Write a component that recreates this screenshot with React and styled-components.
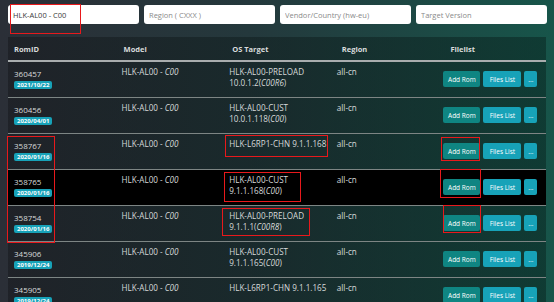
import React from "react";
import styled, { createGlobalStyle } from "styled-components";

const GlobalStyle = createGlobalStyle`
  html, body {
    margin: 0;
    padding: 0;
    width: 554px;
    height: 302px;
    overflow: hidden;
  }
  body {
    background: linear-gradient(90deg, #2b2f37 0%, #24383c 45%, #17554a 100%);
    font-family: "Open Sans", "Liberation Sans", sans-serif;
  }
`;

const Page = styled.div`
  position: relative;
  width: 554px;
  height: 302px;
  padding: 5px 7px 0 8px;
  box-sizing: border-box;
`;

const SearchBar = styled.div`
  display: grid;
  grid-template-columns: repeat(4, 1fr);
  column-gap: 5px;
  width: 539px;
`;

const SearchInput = styled.input`
  height: 19px;
  box-sizing: border-box;
  border: none;
  border-radius: 3px;
  background: #fff;
  padding: 0 5px;
  font-family: "Open Sans", "Liberation Sans", sans-serif;
  font-size: 7.5px;
  color: #3a3a3a;
  outline: none;
  &::placeholder {
    color: #8a8a8a;
  }
`;

const Table = styled.div`
  margin-top: 13px;
  width: 538px;
  background: linear-gradient(90deg, rgba(20, 22, 26, 0.5), rgba(8, 34, 30, 0.5));
`;

const Row = styled.div`
  display: grid;
  grid-template-columns: repeat(5, 1fr);
  height: ${(p) => (p.$head ? "23px" : "35px")};
  border-bottom: ${(p) => (p.$head ? "2px solid #a9adae" : "1px solid #7d8584")};
  background: ${(p) => (p.$hover ? "#000" : "transparent")};
`;

const HeadCell = styled.div`
  padding-left: ${(p) => p.$pad}px;
  display: flex;
  align-items: center;
  font-weight: 700;
  font-size: 7.5px;
  color: #d9dcdc;
`;

const Cell = styled.div`
  padding: 5px 0 0 6px;
  font-size: 8.1px;
  line-height: 10.5px;
  color: #d7dada;
  white-space: nowrap;
  em {
    font-style: italic;
  }
`;

const RomId = styled.div`
  font-size: 8px;
  line-height: 11px;
  margin-top: 1px;
`;

const Badge = styled.span`
  display: inline-block;
  margin-top: 2px;
  padding: 0 3px;
  height: 8px;
  line-height: 8px;
  border-radius: 2px;
  background: #17a2b8;
  color: #fff;
  font-size: 6px;
  font-weight: 700;
`;

const Actions = styled.div`
  display: flex;
  gap: 3px;
  padding: 9px 0 0 5px;
`;

const Btn = styled.button`
  height: 16px;
  width: ${(p) => p.$w}px;
  padding: 0;
  border: none;
  border-radius: 2px;
  background: ${(p) => (p.$dark ? "#0f8582" : "#17a2b8")};
  color: #fff;
  font-family: "Open Sans", "Liberation Sans", sans-serif;
  font-size: 6.5px;
  cursor: pointer;
`;

const Mark = styled.div`
  position: absolute;
  border: 1.5px solid #e8191c;
  box-sizing: border-box;
  pointer-events: none;
`;

const rows = [
  { id: "360457", date: "2021/10/22", os: ["HLK-AL00-PRELOAD", "10.0.1.2(", "C00R6", ")"] },
  { id: "360456", date: "2020/04/01", os: ["HLK-AL00-CUST", "10.0.1.118(", "C00", ")"] },
  { id: "358767", date: "2020/01/16", os: ["HLK-L6RP1-CHN 9.1.1.168"] },
  { id: "358765", date: "2020/01/16", os: ["HLK-AL00-CUST", "9.1.1.168(", "C00", ")"], hover: true },
  { id: "358754", date: "2020/01/16", os: ["HLK-AL00-PRELOAD", "9.1.1.1(", "C00R8", ")"] },
  { id: "345906", date: "2019/12/24", os: ["HLK-AL00-CUST", "9.1.1.165(", "C00", ")"] },
  { id: "345905", date: "2019/12/24", os: ["HLK-L6RP1-CHN 9.1.1.165"] },
];

const marks = [
  [10, 4, 71, 30],
  [7, 136, 48, 107],
  [225, 135, 103, 22],
  [224, 172, 77, 30],
  [222, 208, 88, 28],
  [441, 137, 39, 24],
  [440, 169, 41, 29],
  [443, 205, 38, 28],
];

const App = () => {
  return (
    <Page>
      <GlobalStyle />
      <SearchBar>
        <SearchInput defaultValue="HLK-AL00 - C00" />
        <SearchInput placeholder="Region ( CXXX )" />
        <SearchInput placeholder="Vendor/Country (hw-eu)" />
        <SearchInput placeholder="Target Version" />
      </SearchBar>

      <Table>
        <Row $head>
          <HeadCell $pad={6}>RomID</HeadCell>
          <HeadCell $pad={8}>Model</HeadCell>
          <HeadCell $pad={9}>OS Target</HeadCell>
          <HeadCell $pad={11}>Region</HeadCell>
          <HeadCell $pad={12}>Filelist</HeadCell>
        </Row>
        {rows.map((r) => (
          <Row key={r.id} $hover={r.hover}>
            <Cell>
              <RomId>{r.id}</RomId>
              <Badge>{r.date}</Badge>
            </Cell>
            <Cell>
              HLK-AL00 - <em>C00</em>
            </Cell>
            <Cell>
              {r.os[0]}
              {r.os.length > 1 && (
                <>
                  <br />
                  {r.os[1]}
                  <em>{r.os[2]}</em>
                  {r.os[3]}
                </>
              )}
            </Cell>
            <Cell>all-cn</Cell>
            <Actions>
              <Btn $dark $w={37}>Add Rom</Btn>
              <Btn $w={38}>Files List</Btn>
              <Btn $w={13}>...</Btn>
            </Actions>
          </Row>
        ))}
      </Table>

      {marks.map(([x, y, w, h], i) => (
        <Mark key={i} style={{ left: x, top: y, width: w, height: h }} />
      ))}
    </Page>
  );
};

export default App;
